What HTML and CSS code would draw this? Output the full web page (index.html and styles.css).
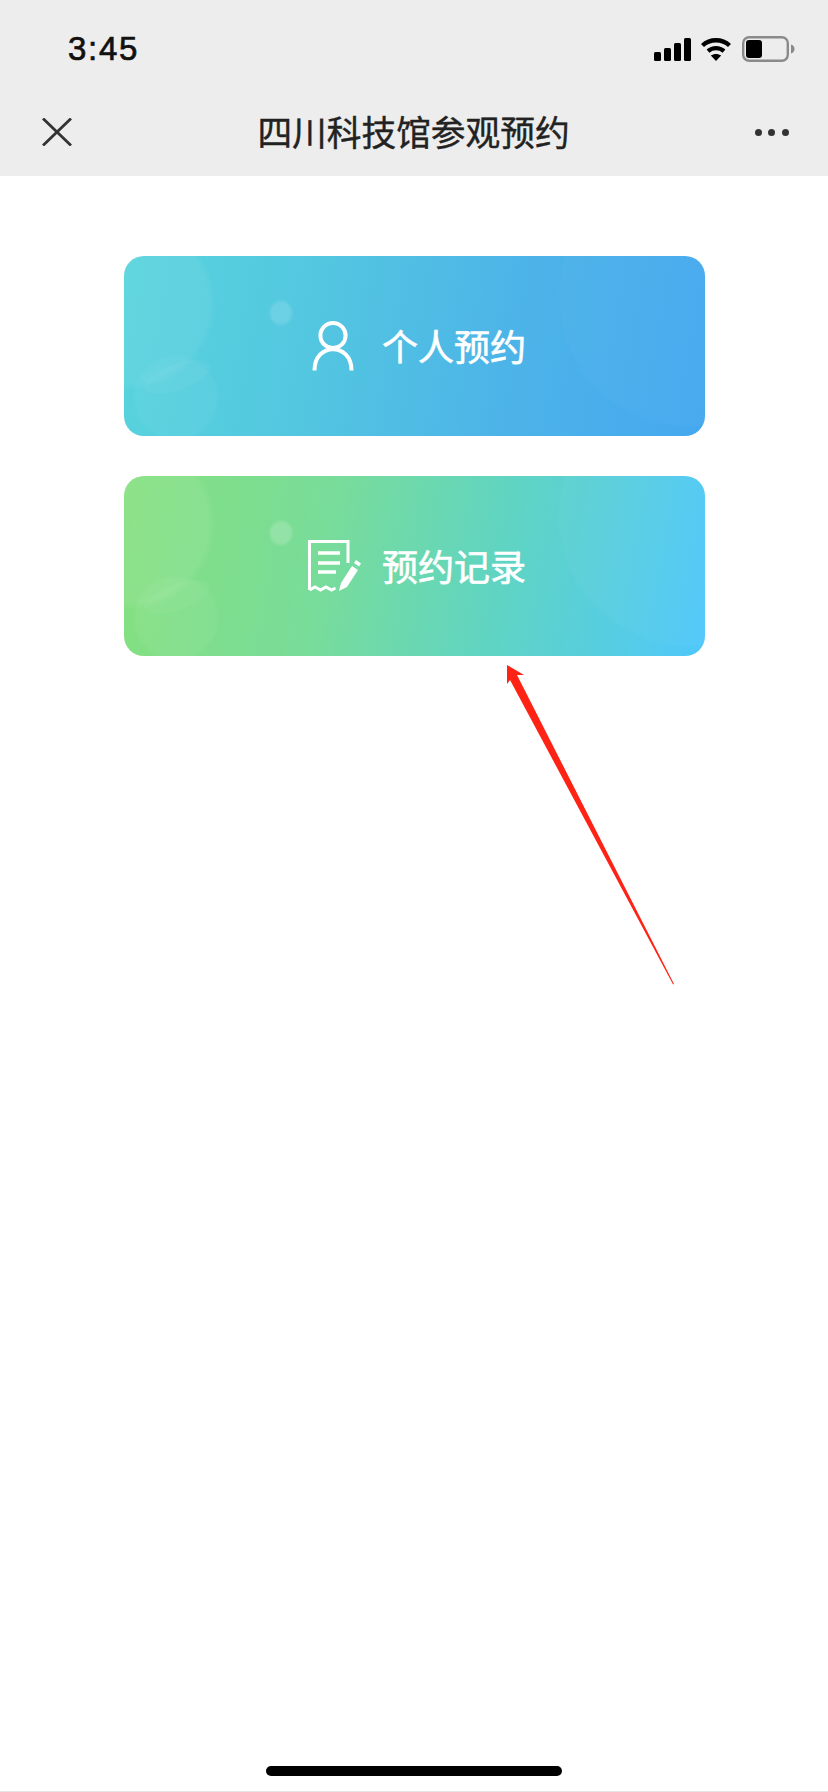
FILE: index.html
```html
<!DOCTYPE html>
<html lang="zh">
<head>
<meta charset="utf-8">
<title>四川科技馆参观预约</title>
<link rel="stylesheet" href="styles.css">
</head>
<body>
<div class="app">
  <header class="top">
    <div class="status">
      <span class="time">3:45</span>
      <div class="status-icons">
        <svg class="signal" width="37" height="23" viewBox="0 0 37 23"><rect x="0" y="14" width="7" height="9" rx="1.5"/><rect x="10" y="10" width="7" height="13" rx="1.5"/><rect x="20" y="5" width="7" height="18" rx="1.5"/><rect x="30" y="0" width="7" height="23" rx="1.5"/></svg>
        <svg class="wifi" width="32" height="24" viewBox="0 0 32 24"><path d="M2.500 8.500C10 1.500 22 1.500 29.500 8.500" fill="none" stroke="#000" stroke-width="4.400"/><path d="M8 14.200c4.600-4 11.400-4 16 0" fill="none" stroke="#000" stroke-width="4.200"/><path d="M10.800 18.600 16 24l5.200-5.400c-3-2.200-7.400-2.200-10.400 0z"/></svg>
        <svg class="battery" width="53" height="26" viewBox="0 0 53 26"><rect x="1.200" y="1.200" width="44.600" height="23.600" rx="6" fill="none" stroke="#8a8a8a" stroke-width="2.400"/><rect x="4" y="4" width="16" height="18" rx="3"/><path d="M49 8.500c2.500.8 3.500 2.500 3.500 4.500s-1 3.700-3.500 4.500z" fill="#8a8a8a"/></svg>
      </div>
    </div>
    <nav class="nav">
      <svg class="close" width="30" height="28" viewBox="0 0 30 28"><path d="M1 0.500 29 27.500M29 0.500 1 27.500" stroke="#333" stroke-width="2.800" fill="none"/></svg>
      <h1 class="title">四川科技馆参观预约</h1>
      <div class="more"><i></i><i></i><i></i></div>
    </nav>
  </header>

  <main class="main">
    <a class="card card-blue">
      <svg class="card-icon" width="60" height="60" viewBox="-2 0 60 60" fill="none" stroke="#fff" stroke-width="4"><circle cx="28" cy="19.500" r="12.600"/><path d="M9.500 54.500C9.500 26 46.500 26 46.500 54.500"/></svg>
      <span class="card-label">个人预约</span>
    </a>
    <a class="card card-green">
      <svg class="card-icon" width="60" height="60" viewBox="-2 0 60 60" fill="none" stroke="#fff" stroke-width="3"><path d="M4.500 54V5.500H43V27M4.500 54l5.500-3 5.500 3 5.500-3 5.500 3 4-2"/><path d="M13 17H35M13 27H35M13 36H31" stroke-width="3.400"/><path d="M34 55l2-8 11-17 6 4-11 17z" fill="#fff" stroke="none"/><path d="M49 27l2-3 5 3.500-2 3z" fill="#fff" stroke="none"/></svg>
      <span class="card-label">预约记录</span>
    </a>
  </main>

  <div class="home"><span class="home-bar"></span></div>

  <svg class="arrow" width="828" height="1792" viewBox="0 0 828 1792"><polygon points="507,665 524,675 517,675 674,984 673.100,984.500 510,680 507,684"/></svg>
</div>
</body>
</html>
```
FILE: styles.css
```css
* { box-sizing: border-box; }
html, body { margin: 0; padding: 0; background: #fff; }
.app { position: relative; width: 828px; height: 1792px; display: flex; flex-direction: column; overflow: hidden; font-family: "Noto Sans CJK SC", "Liberation Sans", sans-serif; }
.top { height: 176px; background: #ededed; flex: none; }
.status { height: 88px; padding: 10px 33px 0 68px; display: flex; align-items: center; justify-content: space-between; }
.time { font-family: "Liberation Sans", sans-serif; font-size: 33px; letter-spacing: 1.700px; color: #111; -webkit-text-stroke: 0.700px #111; }
.status-icons { display: flex; align-items: center; gap: 10px; }
.signal { margin-right: -1px; }
.nav { height: 88px; padding: 0 39px 0 42px; display: flex; align-items: center; justify-content: space-between; }
.close { flex: none; }
.title { margin: 0 0 2px; font-size: 34.700px; font-weight: 400; color: #222; white-space: nowrap; -webkit-text-stroke: 0.400px #222; }
.more { width: 34px; display: flex; justify-content: space-between; }
.more i { width: 7px; height: 7px; border-radius: 50%; background: #333; }
.main { flex: 1; padding: 80px 123px 0 124px; display: flex; flex-direction: column; gap: 40px; }
.card { position: relative; overflow: hidden; height: 180px; border-radius: 20px; display: flex; align-items: center; justify-content: center; gap: 19px; }
.card::before { content: ""; position: absolute; left: 18px; top: 108px; width: 70px; height: 26px; border-radius: 50%; background: rgba(255,255,255,.04); transform: rotate(-20deg); }
.card-icon { flex: none; }
.card-label { margin-bottom: 3px; font-size: 36px; line-height: 1; color: #fff; white-space: nowrap; -webkit-text-stroke: 0.600px #fff; }
.card-blue {
  background:
    radial-gradient(ellipse 13px 14px at 157px 57px, rgba(255,255,255,.14) 70%, transparent 100%),
    radial-gradient(circle 44px at 52px 142px, rgba(255,255,255,.04) 90%, transparent 100%),
    radial-gradient(circle 86px at 6px 48px, rgba(255,255,255,.06) 92%, transparent 100%),
    radial-gradient(circle 132px at 565px 40px, rgba(255,255,255,.025) 97%, transparent 100%),
    linear-gradient(100deg, #58d4dc 0%, #53c7e0 32%, #4db4e8 65%, #45a8ef 100%);
}
.card-green {
  background:
    radial-gradient(ellipse 13px 14px at 157px 57px, rgba(255,255,255,.18) 70%, transparent 100%),
    radial-gradient(circle 44px at 52px 142px, rgba(255,255,255,.05) 90%, transparent 100%),
    radial-gradient(circle 86px at 6px 48px, rgba(255,255,255,.07) 92%, transparent 100%),
    radial-gradient(circle 132px at 565px 40px, rgba(255,255,255,.03) 97%, transparent 100%),
    linear-gradient(100deg, #85e07e 0%, #78dc9a 35%, #5fd4c4 65%, #4fc7fb 100%);
}
.card-label, .card-icon { position: relative; }
.home { flex: none; height: 26px; display: flex; justify-content: center; border-bottom: 1px solid #e6e6e6; }
.home-bar { width: 296px; height: 10px; border-radius: 5px; background: #000; }
.arrow { position: absolute; left: 0; top: 0; pointer-events: none; }
.arrow polygon { fill: #ff2316; }
```
